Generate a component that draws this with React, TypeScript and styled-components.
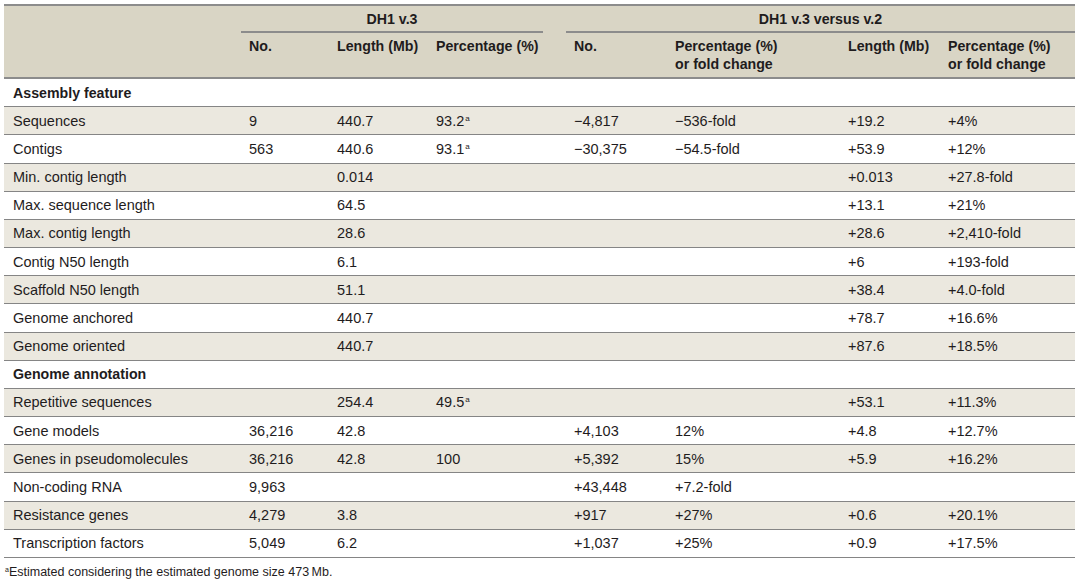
import React from "react";
import styled, { createGlobalStyle } from "styled-components";

const GlobalStyle = createGlobalStyle`
  html, body {
    margin: 0;
    padding: 0;
    background: #ffffff;
  }
  body {
    font-family: "Liberation Sans", Arial, sans-serif;
    color: #1f1c1d;
  }
`;

const COLS = "237px 88px 99px 138px 101px 173px 100px 135px";

const Page = styled.div`
  width: 1080px;
  height: 582px;
  box-sizing: border-box;
  padding: 4px 0 0 4px;
  overflow: hidden;
`;

const Table = styled.div`
  width: 1071px;
  border-top: 2px solid #8c8c8c;
`;

const Head = styled.div`
  background: #d9d5c5;
  border-bottom: 2px solid #8c8c8c;
`;

const GroupRow = styled.div`
  display: grid;
  grid-template-columns: ${COLS};
  height: 27px;
`;

const GroupCell = styled.div<{ $span: string; $gap?: number }>`
  grid-column: ${(p) => p.$span};
  margin-right: ${(p) => p.$gap ?? 0}px;
  box-sizing: border-box;
  border-bottom: 2px solid #8c8c8c;
  display: flex;
  align-items: center;
  justify-content: center;
  font-weight: 700;
  font-size: 14.2px;
`;

const SubRow = styled.div`
  display: grid;
  grid-template-columns: ${COLS};
  height: 44px;
`;

const SubCell = styled.div`
  padding: 4px 0 0 8px;
  font-weight: 700;
  font-size: 14.2px;
  line-height: 18px;
  white-space: nowrap;
`;

const Row = styled.div<{ $alt?: boolean }>`
  display: grid;
  grid-template-columns: ${COLS};
  height: 28.18px;
  box-sizing: border-box;
  border-bottom: 1px solid #858585;
  background: ${(p) => (p.$alt ? "#ebe8df" : "#ffffff")};
  align-items: center;
`;

const Cell = styled.div<{ $first?: boolean }>`
  padding-left: ${(p) => (p.$first ? 9 : 8)}px;
  font-size: 14.5px;
  line-height: 16px;
  white-space: nowrap;
`;

const SectionCell = styled.div`
  grid-column: 1 / -1;
  padding-left: 9px;
  font-size: 14.2px;
  font-weight: 700;
`;

const Sup = styled.sup`
  font-size: 8px;
  line-height: 0;
  vertical-align: 0;
  position: relative;
  top: -5px;
  margin-left: 1px;
`;

const Footnote = styled.div`
  font-size: 12.5px;
  padding: 7px 0 0 1px;
  line-height: 14px;
`;

const FootSup = styled.sup`
  font-size: 7px;
  line-height: 0;
  vertical-align: 0;
  position: relative;
  top: -4px;
`;

type Val = string | { v: string; sup: string };

type DataRow = { label: string; cells: Val[] };

const assembly: DataRow[] = [
  { label: "Sequences", cells: ["9", "440.7", { v: "93.2", sup: "a" }, "\u22124,817", "\u2212536-fold", "+19.2", "+4%"] },
  { label: "Contigs", cells: ["563", "440.6", { v: "93.1", sup: "a" }, "\u221230,375", "\u221254.5-fold", "+53.9", "+12%"] },
  { label: "Min. contig length", cells: ["", "0.014", "", "", "", "+0.013", "+27.8-fold"] },
  { label: "Max. sequence length", cells: ["", "64.5", "", "", "", "+13.1", "+21%"] },
  { label: "Max. contig length", cells: ["", "28.6", "", "", "", "+28.6", "+2,410-fold"] },
  { label: "Contig N50 length", cells: ["", "6.1", "", "", "", "+6", "+193-fold"] },
  { label: "Scaffold N50 length", cells: ["", "51.1", "", "", "", "+38.4", "+4.0-fold"] },
  { label: "Genome anchored", cells: ["", "440.7", "", "", "", "+78.7", "+16.6%"] },
  { label: "Genome oriented", cells: ["", "440.7", "", "", "", "+87.6", "+18.5%"] },
];

const annotation: DataRow[] = [
  { label: "Repetitive sequences", cells: ["", "254.4", { v: "49.5", sup: "a" }, "", "", "+53.1", "+11.3%"] },
  { label: "Gene models", cells: ["36,216", "42.8", "", "+4,103", "12%", "+4.8", "+12.7%"] },
  { label: "Genes in pseudomolecules", cells: ["36,216", "42.8", "100", "+5,392", "15%", "+5.9", "+16.2%"] },
  { label: "Non-coding RNA", cells: ["9,963", "", "", "+43,448", "+7.2-fold", "", ""] },
  { label: "Resistance genes", cells: ["4,279", "3.8", "", "+917", "+27%", "+0.6", "+20.1%"] },
  { label: "Transcription factors", cells: ["5,049", "6.2", "", "+1,037", "+25%", "+0.9", "+17.5%"] },
];

const renderVal = (c: Val) =>
  typeof c === "string" ? (
    c
  ) : (
    <>
      {c.v}
      <Sup>{c.sup}</Sup>
    </>
  );

const DataRows = ({ rows }: { rows: DataRow[] }) => (
  <>
    {rows.map((r, i) => (
      <Row key={r.label} $alt={i % 2 === 0}>
        <Cell $first>{r.label}</Cell>
        {r.cells.map((c, j) => (
          <Cell key={j}>{renderVal(c)}</Cell>
        ))}
      </Row>
    ))}
  </>
);

export default function App() {
  return (
    <>
      <GlobalStyle />
      <Page>
        <Table>
          <Head>
            <GroupRow>
              <GroupCell $span="2 / 5" $gap={23}>
                DH1 v.3
              </GroupCell>
              <GroupCell $span="5 / 9">DH1 v.3 versus v.2</GroupCell>
            </GroupRow>
            <SubRow>
              <SubCell />
              <SubCell>No.</SubCell>
              <SubCell>Length (Mb)</SubCell>
              <SubCell>Percentage (%)</SubCell>
              <SubCell>No.</SubCell>
              <SubCell>
                Percentage (%)
                <br />
                or fold change
              </SubCell>
              <SubCell>Length (Mb)</SubCell>
              <SubCell>
                Percentage (%)
                <br />
                or fold change
              </SubCell>
            </SubRow>
          </Head>
          <Row>
            <SectionCell>Assembly feature</SectionCell>
          </Row>
          <DataRows rows={assembly} />
          <Row>
            <SectionCell>Genome annotation</SectionCell>
          </Row>
          <DataRows rows={annotation} />
        </Table>
        <Footnote>
          <FootSup>a</FootSup>Estimated considering the estimated genome size 473&#8201;Mb.
        </Footnote>
      </Page>
    </>
  );
}
